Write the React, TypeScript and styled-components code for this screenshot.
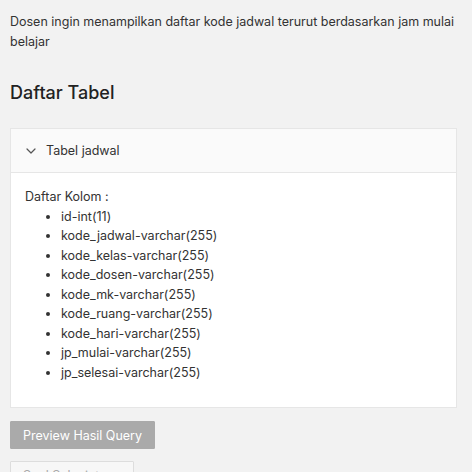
import React from 'react';
import styled, { createGlobalStyle } from 'styled-components';

const GlobalStyle = createGlobalStyle`
  html, body {
    margin: 0;
    padding: 0;
    background: #ffffff;
  }
  body {
    font-family: Inter, "Noto Sans", sans-serif;
    color: #333333;
  }
`;

const Page = styled.div`
  width: 472px;
  height: 472px;
  overflow: hidden;
  background: #f2f2f2;
  box-sizing: border-box;
  padding: 12px 10px 0 10px;
`;

const Intro = styled.p`
  margin: 0;
  font-size: 12.5px;
  line-height: 20px;
  color: #333333;
`;

const Heading = styled.h2`
  margin: 28px 0 0 0;
  font-size: 18px;
  font-weight: 500;
  line-height: 26px;
  color: #222222;
`;

const Card = styled.section`
  margin-top: 22px;
  width: 447px;
  background: #ffffff;
  border: 1px solid #e6e6e6;
  box-sizing: border-box;
`;

const CardHeader = styled.div`
  display: flex;
  align-items: center;
  gap: 9px;
  height: 43px;
  padding: 0 0 0 14px;
  background: #fafafa;
  border-bottom: 1px solid #e6e6e6;
  font-size: 12.5px;
  color: #333333;
`;

const Chevron = styled.svg`
  width: 12px;
  height: 12px;
  flex: none;
`;

const CardBody = styled.div`
  padding: 14px 14px 25px 14px;
  font-size: 12.5px;
  line-height: 19.5px;
  color: #333333;
`;

const ColumnList = styled.ul`
  margin: 0;
  padding: 0 0 0 36px;
  list-style: disc;
`;

const ColumnItem = styled.li`
  padding-left: 0;
`;

const Actions = styled.div`
  display: flex;
  flex-direction: column;
  align-items: flex-start;
  gap: 12px;
  margin-top: 13px;
`;

const Button = styled.button<{ $variant: 'solid' | 'outline' }>`
  font-family: Inter, "Noto Sans", sans-serif;
  font-size: 12.5px;
  height: 28px;
  padding: 0 ${(p) => (p.$variant === 'solid' ? '12px' : '12px')};
  border-radius: 1px;
  cursor: default;
  border: 1px solid ${(p) => (p.$variant === 'solid' ? '#aaaaaa' : '#dddddd')};
  background: ${(p) => (p.$variant === 'solid' ? '#aaaaaa' : '#f7f7f7')};
  color: ${(p) => (p.$variant === 'solid' ? '#ffffff' : '#aaaaaa')};
`;

const columns = [
  'id-int(11)',
  'kode_jadwal-varchar(255)',
  'kode_kelas-varchar(255)',
  'kode_dosen-varchar(255)',
  'kode_mk-varchar(255)',
  'kode_ruang-varchar(255)',
  'kode_hari-varchar(255)',
  'jp_mulai-varchar(255)',
  'jp_selesai-varchar(255)',
];

export default function App() {
  return (
    <>
      <GlobalStyle />
      <Page>
        <Intro>
          Dosen ingin menampilkan daftar kode jadwal terurut berdasarkan jam mulai belajar
        </Intro>
        <Heading>Daftar Tabel</Heading>
        <Card>
          <CardHeader>
            <Chevron viewBox="0 0 12 12" fill="none">
              <path d="M2 4 L6 8 L10 4" stroke="#555" strokeWidth="1.2" strokeLinecap="round" strokeLinejoin="round" />
            </Chevron>
            <span>Tabel jadwal</span>
          </CardHeader>
          <CardBody>
            <div>Daftar Kolom :</div>
            <ColumnList>
              {columns.map((c) => (
                <ColumnItem key={c}>{c}</ColumnItem>
              ))}
            </ColumnList>
          </CardBody>
        </Card>
        <Actions>
          <Button $variant="solid">Preview Hasil Query</Button>
          <Button $variant="outline">Soal Selanjutnya</Button>
        </Actions>
      </Page>
    </>
  );
}
